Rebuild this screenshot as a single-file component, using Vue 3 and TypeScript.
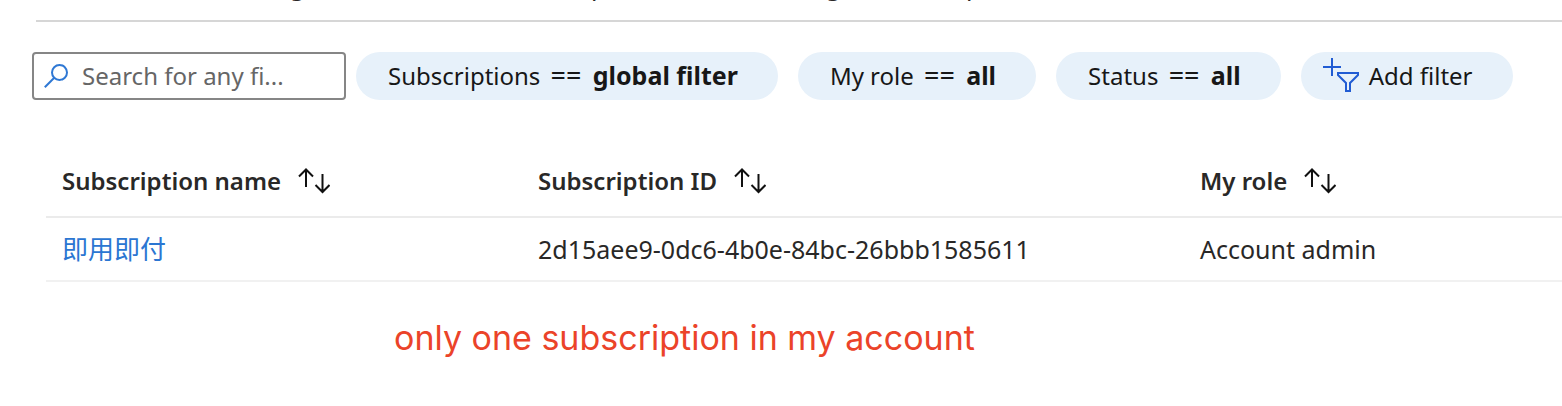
<script setup lang="ts">
import { ref } from 'vue'

interface Filter { label: string; value: string }
interface Subscription { name: string; id: string; role: string }

const query = ref('')
const filters: Filter[] = [
  { label: 'Subscriptions', value: 'global filter' },
  { label: 'My role', value: 'all' },
  { label: 'Status', value: 'all' },
]
const columns: string[] = ['Subscription name', 'Subscription ID', 'My role']
const rows: Subscription[] = [
  { name: '即用即付', id: '2d15aee9-0dc6-4b0e-84bc-26bbb1585611', role: 'Account admin' },
]
</script>

<template>
  <main class="page">
    <header class="intro">
      <p class="intro-text"><span>g</span><span>p</span><span>g</span><span>p</span></p>
    </header>

    <form class="filters" @submit.prevent>
      <label class="search">
        <svg class="search-icon" viewBox="0 0 24 24" aria-hidden="true">
          <circle cx="15.5" cy="8.5" r="7.5" />
          <path d="M10 14 L0.8 23.2" />
        </svg>
        <input v-model="query" type="text" placeholder="Search for any fi..." aria-label="Search for any field" />
      </label>
      <button v-for="f in filters" :key="f.label" type="button" class="pill">
        {{ f.label }} <span class="operator">==</span> <strong>{{ f.value }}</strong>
      </button>
      <button type="button" class="pill add">
        <svg class="add-icon" viewBox="0 0 36 36" aria-hidden="true">
          <path d="M0 9H18M9 0V18" />
          <path d="M15 15H35V17L27 25V33H23V25L15 17Z" />
        </svg>
        Add filter
      </button>
    </form>

    <table class="grid">
      <thead>
        <tr>
          <th v-for="c in columns" :key="c" scope="col">
            <button type="button" class="sort">
              {{ c }}
              <svg class="sort-icon" viewBox="0 0 32 26" aria-hidden="true">
                <path d="M8 19V1.500M1 8.500L8 1.500L15 8.500M24.500 6V24M17.500 17L24.500 24L31.500 17" />
              </svg>
            </button>
          </th>
        </tr>
      </thead>
      <tbody>
        <tr v-for="r in rows" :key="r.id">
          <td><a href="#">{{ r.name }}</a></td>
          <td>{{ r.id }}</td>
          <td>{{ r.role }}</td>
        </tr>
      </tbody>
    </table>

    <p class="note">only one subscription in my account</p>
  </main>
</template>

<style>
body {
  margin: 0;
  background: #fff;
}
</style>

<style scoped>
.page {
  overflow: hidden;
  color: #292827;
  font: 25px/32px "Noto Sans", "Noto Sans CJK SC", sans-serif;
}
.intro {
  height: 20px;
  margin-left: 36px;
  border-bottom: 2px solid #d6d6d6;
}
.intro-text {
  display: grid;
  grid-template-columns: 301px 235px 140px 1fr;
  align-content: end;
  height: 1px;
  margin: 0;
  padding-left: 254px;
  overflow: hidden;
}
.filters {
  display: flex;
  align-items: center;
  gap: 20px;
  margin: 30px 32px 0;
  font-size: 24px;
}
.search {
  display: flex;
  box-sizing: border-box;
  align-items: center;
  gap: 14px;
  width: 314px;
  height: 48px;
  margin-right: -10px;
  padding: 0 10px;
  border: 2px solid #868686;
  border-radius: 4px;
}
.search-icon {
  flex: none;
  width: 24px;
  height: 24px;
  fill: none;
  stroke: #2f78d4;
  stroke-width: 2;
}
.search input {
  flex: 1;
  min-width: 0;
  padding: 0;
  border: 0;
  outline: 0;
  background: none;
  color: #171717;
  font: inherit;
}
.search input::placeholder {
  color: #666;
  opacity: 1;
}
.pill {
  height: 48px;
  padding: 0 40px 2px 32px;
  border: 0;
  border-radius: 24px;
  background: #e7f1fa;
  color: #171717;
  font: inherit;
  white-space: nowrap;
}
.pill strong {
  font-size: 25px;
}
.operator {
  margin: 0 5px 0 4px;
  font-size: 27px;
  line-height: 24px;
}
.add {
  display: flex;
  align-items: center;
  gap: 10px;
  padding: 0 40px 0 22px;
}
.add-icon {
  width: 36px;
  height: 36px;
  fill: none;
  stroke: #215cd3;
  stroke-width: 2;
}
.grid {
  width: calc(100% - 46px);
  margin: 46px 0 0 46px;
  border-collapse: collapse;
  table-layout: fixed;
}
.grid th,
.grid td {
  padding: 0 16px;
  text-align: left;
}
.grid th {
  height: 70px;
  border-bottom: 2px solid #ebebeb;
}
.grid td {
  height: 62px;
  border-bottom: 2px solid #f1f1f1;
}
.grid th:nth-child(1) {
  width: 444px;
}
.grid th:nth-child(2) {
  width: 630px;
}
.sort {
  display: flex;
  align-items: center;
  gap: 17px;
  padding: 0;
  border: 0;
  background: none;
  color: inherit;
  font: inherit;
  font-size: 24px;
  font-weight: 600;
}
.sort-icon {
  width: 32px;
  height: 26px;
  fill: none;
  stroke: #111;
  stroke-width: 2;
}
.grid a {
  color: #2b76d2;
  font-size: 26px;
  text-decoration: none;
}
.note {
  margin: 34px 0 0 394px;
  color: #eb4329;
  font: 34px/44px Inter, sans-serif;
}
</style>
